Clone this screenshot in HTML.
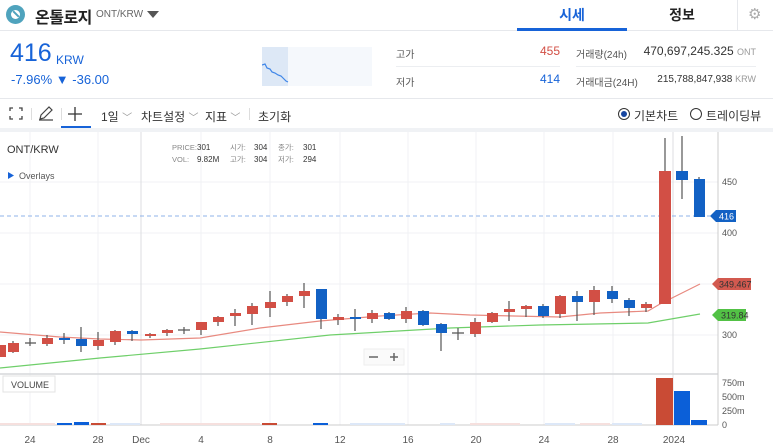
<!DOCTYPE html>
<html><head><meta charset="utf-8"><style>
*{margin:0;padding:0;box-sizing:border-box}
body{width:773px;height:446px;overflow:hidden;background:#fff;font-family:"Liberation Sans","Noto Sans CJK KR",sans-serif;position:relative;color:#333}
.a{position:absolute;white-space:nowrap}
</style></head><body>
<!-- header -->
<div class="a" style="left:0;top:0;width:773px;height:31px;border-bottom:1px solid #e6e8ec"></div>
<div class="a" style="left:6px;top:5px;width:19px;height:19px;border-radius:50%;background:#4fa3bd"></div>
<div class="a" style="left:11px;top:10px;width:9px;height:9px;border-radius:50%;background:#fff"></div>
<div class="a" style="left:12px;top:13px;width:8px;height:2px;background:#4fa3bd;transform:rotate(45deg)"></div>
<div class="a" style="left:35px;top:4px;font-size:16px;font-weight:bold;color:#222;letter-spacing:-0.5px">온톨로지</div>
<div class="a" style="left:96px;top:9px;font-size:10px;color:#666">ONT/KRW</div>
<div class="a" style="left:147px;top:11px;width:0;height:0;border-left:6px solid transparent;border-right:6px solid transparent;border-top:7px solid #555"></div>
<div class="a" style="left:517px;top:5px;width:110px;text-align:center;font-size:14px;font-weight:bold;color:#1763d8">시세</div>
<div class="a" style="left:517px;top:28px;width:110px;height:3px;background:#1763d8"></div>
<div class="a" style="left:627px;top:5px;width:110px;text-align:center;font-size:14px;font-weight:bold;color:#222">정보</div>
<div class="a" style="left:737px;top:0;width:1px;height:31px;background:#e6e8ec"></div>
<div class="a" style="left:748px;top:5px;font-size:15px;color:#aaa">⚙</div>
<!-- price block -->
<div class="a" style="left:10px;top:39px;font-size:25px;color:#1763d8;font-weight:500">416</div>
<div class="a" style="left:56px;top:53px;font-size:12px;color:#1763d8">KRW</div>
<div class="a" style="left:11px;top:72px;font-size:13px;color:#1763d8">-7.96% ▼ -36.00</div>
<svg class="a" style="left:262px;top:47px" width="110" height="39"><rect width="110" height="39" fill="#f5f8fc"/><rect width="26" height="39" fill="#dde8f6"/><polyline points="0,18 3,17 5,21 8,22 10,25 13,26 16,28 19,29 21,31 24,34 26,35" fill="none" stroke="#3f86e8" stroke-width="1.2"/></svg>
<div class="a" style="left:396px;top:46px;font-size:10px;color:#555">고가</div>
<div class="a" style="left:500px;top:44px;width:60px;text-align:right;font-size:12px;color:#d24f45">455</div>
<div class="a" style="left:396px;top:66px;width:164px;height:1px;background:#eceef1"></div>
<div class="a" style="left:396px;top:74px;font-size:10px;color:#555">저가</div>
<div class="a" style="left:500px;top:72px;width:60px;text-align:right;font-size:12px;color:#1763d8">414</div>
<div class="a" style="left:576px;top:46px;font-size:10px;color:#555">거래량(24h)</div>
<div class="a" style="left:600px;top:44px;width:156px;text-align:right;font-size:12px;color:#333">470,697,245.325 <span style="font-size:9px;color:#999">ONT</span></div>
<div class="a" style="left:576px;top:66px;width:180px;height:1px;background:#eceef1"></div>
<div class="a" style="left:576px;top:74px;font-size:10px;color:#555">거래대금(24H)</div>
<div class="a" style="left:600px;top:74px;width:156px;text-align:right;font-size:10px;color:#333">215,788,847,938 <span style="font-size:9px;color:#999">KRW</span></div>
<!-- toolbar -->
<div class="a" style="left:0;top:98px;width:773px;height:1px;background:#e6e8ec"></div>
<div class="a" style="left:0;top:128px;width:773px;height:4px;background:#f0f2f5"></div>
<svg class="a" style="left:9px;top:107px" width="14" height="13" fill="none" stroke="#444" stroke-width="1.3"><path d="M1 4V1H4M10 1H13V4M13 9V12H10M4 12H1V9"/></svg>
<div class="a" style="left:31px;top:108px;width:1px;height:12px;background:#ddd"></div>
<svg class="a" style="left:38px;top:105px" width="16" height="16" fill="none" stroke="#444" stroke-width="1.2"><path d="M2 14L3 10L11 2L14 5L6 13ZM1 15H15"/></svg>
<div class="a" style="left:61px;top:108px;width:1px;height:12px;background:#ddd"></div>
<svg class="a" style="left:67px;top:106px" width="16" height="16" stroke="#333" stroke-width="1.3"><path d="M8 1V15M1 8H15"/></svg>
<div class="a" style="left:61px;top:126px;width:30px;height:2px;background:#1763d8"></div>
<div class="a" style="left:101px;top:108px;font-size:12px;color:#333">1일 <span style="color:#999;font-size:10px">﹀</span></div>
<div class="a" style="left:141px;top:108px;font-size:12px;color:#333">차트설정 <span style="color:#999;font-size:10px">﹀</span></div>
<div class="a" style="left:205px;top:108px;font-size:12px;color:#333">지표 <span style="color:#999;font-size:10px">﹀</span></div>
<div class="a" style="left:249px;top:108px;width:1px;height:12px;background:#ddd"></div>
<div class="a" style="left:258px;top:108px;font-size:12px;color:#333">초기화</div>
<div class="a" style="left:618px;top:108px;width:12px;height:12px;border-radius:50%;border:1.3px solid #333"></div>
<div class="a" style="left:621px;top:111px;width:6px;height:6px;border-radius:50%;background:#1746a0"></div>
<div class="a" style="left:634px;top:107px;font-size:12px;color:#333">기본차트</div>
<div class="a" style="left:690px;top:108px;width:12px;height:12px;border-radius:50%;border:1.3px solid #333"></div>
<div class="a" style="left:706px;top:107px;font-size:12px;color:#333">트레이딩뷰</div>
<!-- chart -->
<svg class="a" style="left:0;top:0" width="773" height="446" font-family="Liberation Sans, sans-serif">
<g stroke="#f1f2f4" stroke-width="1">
<line x1="30" y1="132" x2="30" y2="425"/><line x1="98" y1="132" x2="98" y2="425"/><line x1="201" y1="132" x2="201" y2="425"/><line x1="270" y1="132" x2="270" y2="425"/><line x1="340" y1="132" x2="340" y2="425"/><line x1="408" y1="132" x2="408" y2="425"/><line x1="476" y1="132" x2="476" y2="425"/><line x1="544" y1="132" x2="544" y2="425"/><line x1="613" y1="132" x2="613" y2="425"/>
<line x1="0" y1="182" x2="718" y2="182"/><line x1="0" y1="233" x2="718" y2="233"/><line x1="0" y1="284" x2="718" y2="284"/><line x1="0" y1="335" x2="718" y2="335"/>
</g>
<line x1="141" y1="132" x2="141" y2="425" stroke="#dcdde0"/>
<line x1="673" y1="132" x2="673" y2="425" stroke="#dcdde0"/>
<line x1="0" y1="374" x2="718" y2="374" stroke="#d5d7da" stroke-width="1.5"/>
<line x1="0" y1="425" x2="718" y2="425" stroke="#ccc"/>
<line x1="718" y1="132" x2="718" y2="425" stroke="#ccc"/>
<line x1="0" y1="216" x2="710" y2="216" stroke="#8fb3ea" stroke-dasharray="4,3"/>
<polyline points="0,332 60,337 100,339 141,340 200,338 260,328 320,321 380,316 430,313 470,315 560,317 600,313 648,311 660,304 700,284" fill="none" stroke="#e88a80" stroke-width="1.2"/>
<polyline points="0,368 100,358 200,349 330,335 450,328 540,325 648,323 700,314" fill="none" stroke="#6fcf6a" stroke-width="1.2"/>
<g stroke="#555" stroke-width="1.2">
<path d="M13 341V353M30 338V346M47 335V346M64 333V344M81 327V352M98 332V350M115 330V345M132 330V341M150 333V338M167 329V336M184 327V334M201 322V335M218 316V326M235 309V326M252 303V325M270 291V317M287 294V306M304 283V308M321 289V329M338 314V325M355 309V331M372 310V323M389 312V320M406 307V323M423 310V326M441 323V351M458 328V340M475 318V337M492 312V323M509 301V321M526 305V317M543 304V318M560 295V318M577 291V321M594 286V315M612 286V303M629 298V316M646 302V312M665 138V304M682 136V199M699 177V217"/>
</g>
<g stroke="#555" stroke-width="1.2"><path d="M25 343H36M178 330H190M452 333H464"/></g>
<g fill="#d24f45">
<rect x="0" y="345" width="6" height="12"/><rect x="8" y="343" width="11" height="9"/><rect x="42" y="338" width="11" height="6"/><rect x="93" y="340" width="11" height="6"/><rect x="110" y="331" width="11" height="11"/><rect x="145" y="334" width="11" height="2"/><rect x="162" y="330" width="11" height="3"/><rect x="196" y="322" width="11" height="8"/><rect x="213" y="317" width="11" height="5"/><rect x="230" y="313" width="11" height="3"/><rect x="247" y="306" width="11" height="8"/><rect x="265" y="302" width="11" height="6"/><rect x="282" y="296" width="11" height="6"/><rect x="299" y="291" width="11" height="5"/><rect x="333" y="317" width="11" height="3"/><rect x="367" y="313" width="11" height="6"/><rect x="401" y="311" width="11" height="8"/><rect x="470" y="322" width="11" height="12"/><rect x="487" y="313" width="11" height="9"/><rect x="504" y="309" width="11" height="3"/><rect x="521" y="306" width="11" height="3"/><rect x="555" y="296" width="11" height="18"/><rect x="589" y="290" width="11" height="12"/><rect x="641" y="304" width="11" height="4"/><rect x="659" y="171" width="12" height="133"/>
</g>
<g fill="#1261c4">
<rect x="59" y="338" width="11" height="2"/><rect x="76" y="339" width="11" height="7"/><rect x="127" y="331" width="11" height="3"/><rect x="316" y="289" width="11" height="30"/><rect x="350" y="317" width="11" height="2"/><rect x="384" y="313" width="11" height="6"/><rect x="418" y="311" width="11" height="14"/><rect x="436" y="324" width="11" height="9"/><rect x="538" y="306" width="11" height="10"/><rect x="572" y="296" width="11" height="6"/><rect x="607" y="291" width="11" height="8"/><rect x="624" y="300" width="11" height="8"/><rect x="676" y="171" width="12" height="9"/><rect x="694" y="179" width="11" height="38"/>
</g>
<rect x="656" y="378" width="17" height="47" fill="#c94b35"/>
<rect x="674" y="391" width="16" height="34" fill="#0b5fd8"/>
<rect x="691" y="420" width="16" height="5" fill="#0b5fd8"/>
<g fill="#0b5fd8"><rect x="57" y="423" width="15" height="2"/><rect x="74" y="422" width="15" height="3"/><rect x="313" y="423" width="15" height="2"/></g>
<g fill="#c94b35"><rect x="91" y="423" width="15" height="2"/><rect x="262" y="423" width="15" height="2"/></g>
<g fill="#f6e0de"><rect x="0" y="423" width="55" height="2"/><rect x="160" y="423" width="100" height="2"/><rect x="470" y="423" width="50" height="2"/><rect x="580" y="423" width="30" height="2"/></g>
<g fill="#dde8f8"><rect x="110" y="423" width="30" height="2"/><rect x="350" y="423" width="55" height="2"/><rect x="440" y="423" width="15" height="2"/><rect x="545" y="423" width="30" height="2"/><rect x="612" y="423" width="30" height="2"/></g>
<g font-size="9" fill="#555">
<text x="722" y="185">450</text><text x="722" y="236">400</text><text x="722" y="338">300</text>
<text x="722" y="386">750m</text><text x="722" y="400">500m</text><text x="722" y="414">250m</text><text x="722" y="428">0</text>
</g>
<g font-size="10" fill="#555" text-anchor="middle">
<text x="30" y="443">24</text><text x="98" y="443">28</text><text x="141" y="443">Dec</text><text x="201" y="443">4</text><text x="270" y="443">8</text><text x="340" y="443">12</text><text x="408" y="443">16</text><text x="476" y="443">20</text><text x="544" y="443">24</text><text x="613" y="443">28</text><text x="674" y="443">2024</text>
</g>
<path d="M710 216L716 210H736V222H716Z" fill="#1261c4"/><text x="719" y="219.5" font-size="9" fill="#fff">416</text>
<path d="M712 284L718 278H751V290H718Z" fill="#d2594f"/><text x="719" y="287.5" font-size="9" fill="#333">349.467</text>
<path d="M712 315L718 309H746V321H718Z" fill="#52c145"/><text x="721" y="318.5" font-size="9" fill="#333">319.84</text>
<text x="7" y="153" font-size="11" fill="#333">ONT/KRW</text>
<path d="M8 172L14 175.5L8 179Z" fill="#1763d8"/><text x="19" y="179" font-size="9" fill="#555">Overlays</text>
<g font-size="7.5" fill="#888"><text x="172" y="150">PRICE:</text><text x="172" y="162">VOL:</text><text x="230" y="150">시가:</text><text x="230" y="162">고가:</text><text x="278" y="150">종가:</text><text x="278" y="162">저가:</text></g>
<g font-size="8" fill="#333"><text x="197" y="150">301</text><text x="197" y="162">9.82M</text><text x="254" y="150">304</text><text x="254" y="162">304</text><text x="303" y="150">301</text><text x="303" y="162">294</text></g>
<rect x="364" y="349" width="40" height="16" fill="#fafafa" stroke="#eee"/>
<path d="M369 357H378M390 357H398M394 353V361" stroke="#666" stroke-width="1.5"/>
<rect x="3" y="376" width="52" height="16" fill="#fff" stroke="#e3e3e3"/>
<text x="11" y="388" font-size="9" fill="#444">VOLUME</text>
</svg>
</body></html>
